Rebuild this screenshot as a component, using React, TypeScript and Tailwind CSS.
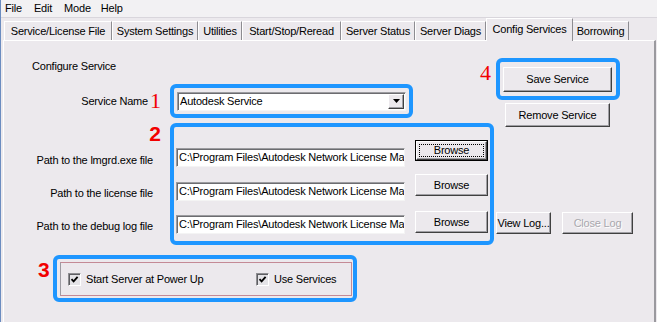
import type { ReactNode } from "react";

const tabs = [
  { label: "Service/License File", w: "w-[108px]" },
  { label: "System Settings", w: "w-[86px]" },
  { label: "Utilities", w: "w-[44px]" },
  { label: "Start/Stop/Reread", w: "w-[99px]" },
  { label: "Server Status", w: "w-[74px]" },
  { label: "Server Diags", w: "w-[71px]" },
];

function RedNum({ children, className = "" }: { children: ReactNode; className?: string }) {
  return (
    <span
      className={`font-['Liberation_Serif','Times_New_Roman',serif] text-[22px] leading-[22px] tracking-normal text-[#f20000] ${className}`}
    >
      {children}
    </span>
  );
}

function Highlight({ children, className = "" }: { children: ReactNode; className?: string }) {
  return <div className={`rounded-[6px] border-4 border-[#1e96ff] ${className}`}>{children}</div>;
}

function Button({
  children,
  className = "",
  disabled = false,
}: {
  children: ReactNode;
  className?: string;
  disabled?: boolean;
}) {
  return (
    <div
      className={`flex items-center justify-center whitespace-nowrap border border-b-[#404040] border-l-white border-r-[#404040] border-t-white bg-[#ece9ed] shadow-[inset_-1px_-1px_0_#a09fa4] ${
        disabled ? "text-[#a9a8ad] [text-shadow:1px_1px_0_#fff]" : ""
      } ${className}`}
    >
      {children}
    </div>
  );
}

function FocusButton({ children, className = "" }: { children: ReactNode; className?: string }) {
  return (
    <div className={`border border-black ${className}`}>
      <div className="flex h-full w-full items-center justify-center border border-b-[#404040] border-l-white border-r-[#404040] border-t-white p-[2px] shadow-[inset_-1px_-1px_0_#a09fa4]">
        <div className="flex h-full w-full items-center justify-center border border-dotted border-black">
          {children}
        </div>
      </div>
    </div>
  );
}

function TextBox({ value, className = "" }: { value: string; className?: string }) {
  return (
    <div
      className={`h-[19px] w-[229px] overflow-hidden whitespace-nowrap border border-b-[#f4f4f4] border-l-[#9c9ca0] border-r-[#f4f4f4] border-t-[#9c9ca0] bg-white pl-[2px] leading-[17px] shadow-[inset_1px_1px_0_#6c6c70] ${className}`}
    >
      {value}
    </div>
  );
}

function CheckBox({ label, className = "" }: { label: string; className?: string }) {
  return (
    <div className={`flex items-center ${className}`}>
      <div className="flex h-[13px] w-[13px] items-center justify-center border border-b-white border-l-[#8e8e92] border-r-white border-t-[#8e8e92] bg-[#e4e3e7] shadow-[inset_1px_1px_0_#5e5e62]">
        <svg viewBox="0 0 9 9" className="h-[9px] w-[9px]">
          <path d="M1.5 4.2 L3.6 6.4 L7.6 1.8" fill="none" stroke="#000" strokeWidth="1.8" />
        </svg>
      </div>
      <span className="ml-[5px]">{label}</span>
    </div>
  );
}

const path = "C:\\Program Files\\Autodesk Network License Manager\\lmgrd.exe";

export default function App() {
  return (
    <div className="h-[322px] w-[657px] overflow-hidden border-l border-[#6b8cc0] bg-[#ece9ed] font-['Liberation_Sans',Arial,sans-serif] text-[11px] leading-[13px] tracking-[-0.2px] text-black">
      {/* menu bar */}
      <div className="flex h-[18px] items-center border-b border-[#d9d6dc] bg-[#f2f1f3] pl-[4px]">
        <span>File</span>
        <span className="ml-[12px]">Edit</span>
        <span className="ml-[12px]">Mode</span>
        <span className="ml-[10px]">Help</span>
      </div>

      {/* tabs */}
      <div className="flex h-[22px] items-end pl-[3px]">
        {tabs.map((t) => (
          <div
            key={t.label}
            className={`flex h-[19px] items-center justify-center border-l border-r border-t border-l-white border-r-[#8d8c91] border-t-white ${t.w}`}
          >
            {t.label}
          </div>
        ))}
        <div className="relative z-10 -mb-px flex h-[23px] w-[87px] items-start justify-center border-l border-r border-t border-l-white border-r-[#8d8c91] border-t-white bg-[#ece9ed] pt-[4px]">
          Config Services
        </div>
        <div className="flex h-[19px] w-[56px] items-center justify-center border-r border-t border-r-[#8d8c91] border-t-white">
          Borrowing
        </div>
      </div>

      {/* panel */}
      <div className="ml-[2px] flex h-[290px] w-[653px] border-l border-r-2 border-t border-l-white border-r-[#9a999e] border-t-white">
        {/* left column */}
        <div className="w-[490px]">
          <div className="ml-[28px] mt-[19px]">Configure Service</div>

          <div className="mt-[11px] flex items-center">
            <div className="w-[144px] text-right">Service Name</div>
            <div className="w-[22px] pl-[2px]">
              <RedNum>1</RedNum>
            </div>
            <Highlight className="flex h-[34px] w-[243px] items-center pl-[3px]">
              <div className="flex h-[19px] w-[229px] items-center justify-between border border-b-[#f4f4f4] border-l-[#9c9ca0] border-r-[#f4f4f4] border-t-[#9c9ca0] bg-white pl-[2px] shadow-[inset_1px_1px_0_#6c6c70]">
                <span>Autodesk Service</span>
                <div className="mr-[1px] flex h-[15px] w-[16px] items-center justify-center border border-b-[#404040] border-l-white border-r-[#404040] border-t-white bg-[#ece9ed] shadow-[inset_-1px_-1px_0_#a09fa4]">
                  <svg viewBox="0 0 7 4" className="h-[4px] w-[7px]">
                    <path d="M0 0 H7 L3.5 4 Z" fill="#000" />
                  </svg>
                </div>
              </div>
            </Highlight>
          </div>

          <div className="mt-[5px] flex items-start">
            <div className="flex w-[166px] flex-col items-end">
              <div className="h-[20px] pr-[9px] font-['Liberation_Sans',Arial,sans-serif] text-[21px] font-bold leading-[22px] tracking-normal text-[#f20000]">
                2
              </div>
              <div className="mt-[11px] pr-[17px]">Path to the lmgrd.exe file</div>
              <div className="mt-[20px] pr-[17px]">Path to the license file</div>
              <div className="mt-[20px] pr-[17px]">Path to the debug log file</div>
            </div>
            <Highlight className="h-[122px] w-[324px] pl-[2px]">
              <div className="mt-[13px] flex items-start">
                <TextBox value={path} className="mt-[8px]" />
                <FocusButton className="ml-[10px] h-[21px] w-[73px]">Browse</FocusButton>
              </div>
              <div className="mt-[7px] flex items-start">
                <TextBox value={path} className="mt-[8px]" />
                <Button className="ml-[10px] h-[22px] w-[73px]">Browse</Button>
              </div>
              <div className="mt-[10px] flex items-start">
                <TextBox value={path} className="mt-[4px]" />
                <Button className="ml-[10px] h-[22px] w-[73px]">Browse</Button>
              </div>
            </Highlight>
          </div>

          <div className="mt-[10px] flex items-start">
            <div className="ml-[34px] mt-[4px] w-[15px] font-['Liberation_Sans',Arial,sans-serif] text-[21px] font-bold leading-[22px] tracking-normal text-[#f20000]">
              3
            </div>
            <Highlight className="h-[47px] w-[304px] pl-[3px] pr-[1px] pt-[3px]">
              <div className="flex h-[34px] items-center border border-[#c48a96] border-l-[#9d9ba2] pl-[7px]">
                <CheckBox label="Start Server at Power Up" className="w-[188px]" />
                <CheckBox label="Use Services" />
              </div>
            </Highlight>
          </div>
        </div>

        {/* right column */}
        <div className="ml-[2px]">
          <Highlight className="relative mt-[17px] flex h-[42px] w-[124px] items-center pl-[3px]">
            <RedNum className="absolute -left-[20px] top-0">4</RedNum>
            <Button className="h-[25px] w-[109px]">Save Service</Button>
          </Highlight>
          <Button className="ml-[9px] mt-[3px] h-[24px] w-[105px]">Remove Service</Button>
          <div className="mt-[85px] flex gap-[11px]">
            <Button className="h-[22px] w-[55px]">View Log...</Button>
            <Button disabled className="h-[22px] w-[71px]">
              Close Log
            </Button>
          </div>
        </div>
      </div>
    </div>
  );
}
